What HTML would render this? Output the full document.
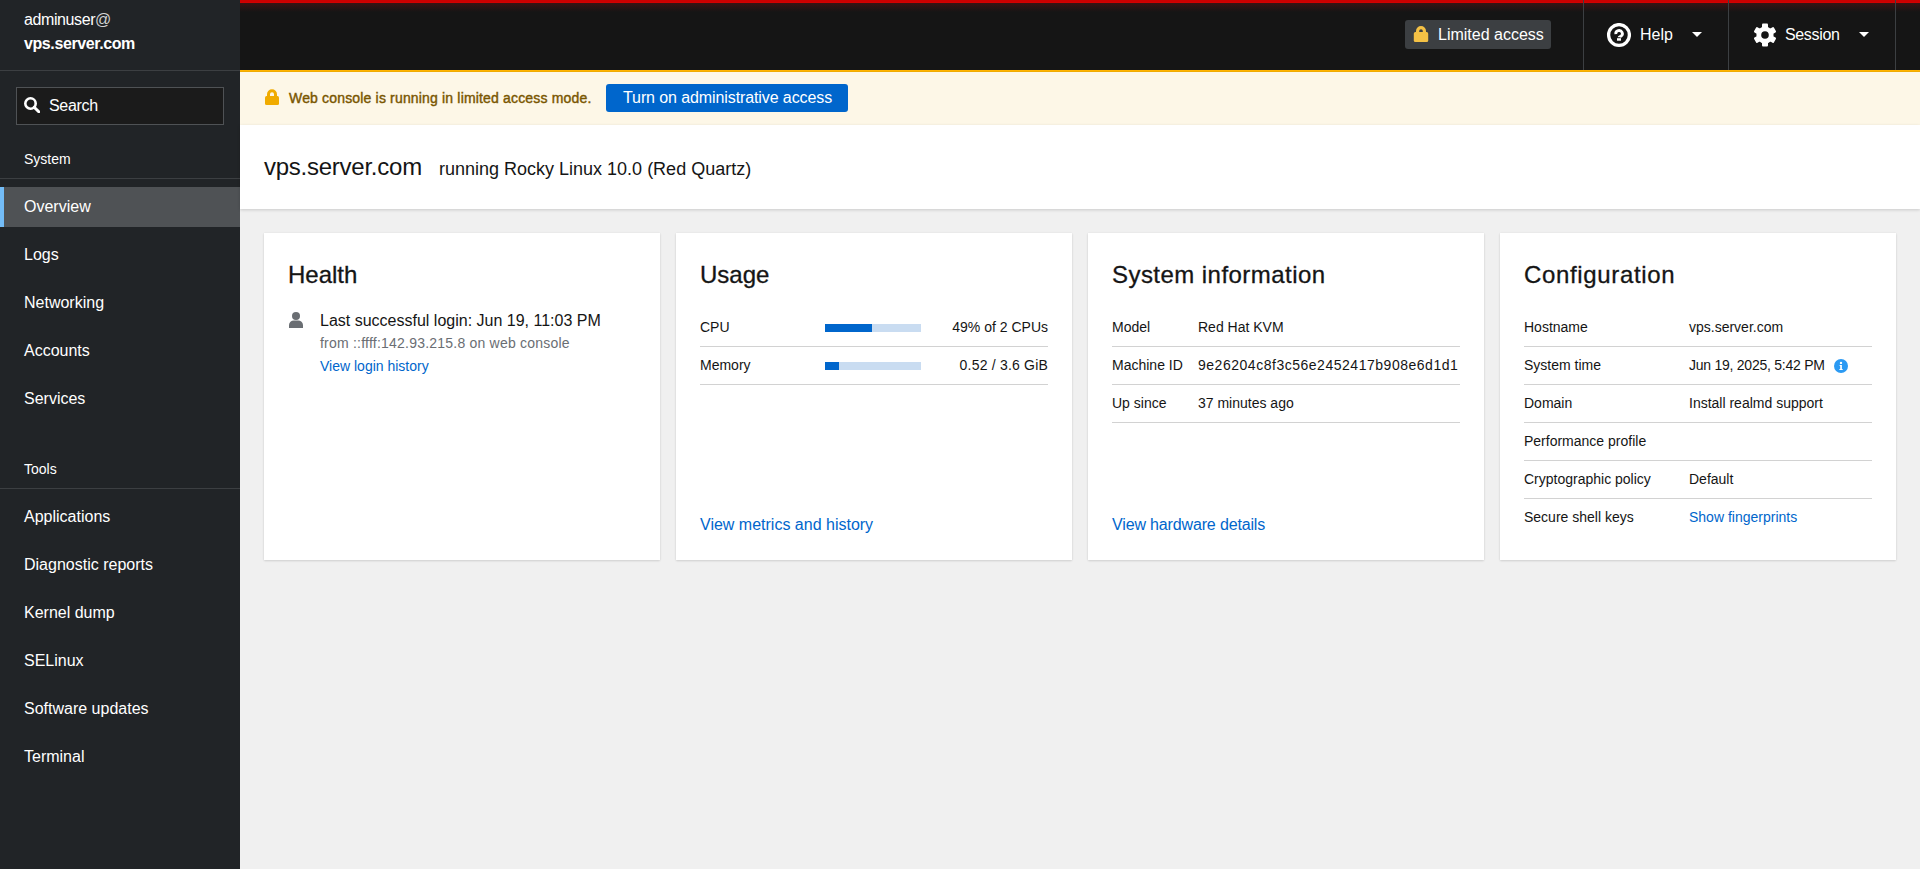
<!DOCTYPE html>
<html><head><meta charset="utf-8">
<style>
*{box-sizing:border-box;margin:0;padding:0}
html,body{width:1920px;height:869px;overflow:hidden}
body{background:#f0f0f0;font-family:"Liberation Sans",sans-serif;color:#151515;position:relative}
.t{position:absolute;line-height:1;white-space:nowrap}
.abs{position:absolute}
#side{position:absolute;left:0;top:0;width:240px;height:869px;background:#212427}
#side .t{color:#fff}
.card{position:absolute;top:233px;width:396px;height:327px;background:#fff;box-shadow:0 1px 2px rgba(3,3,3,.12),0 0 2px rgba(3,3,3,.06)}
#top{position:absolute;left:240px;top:0;width:1680px;height:70px;background:#151515}
</style></head><body>

<!-- SIDEBAR -->
<div id="side">
  <div class="t" style="left:24px;top:11.5px;font-size:16px;letter-spacing:-0.4px">adminuser<span style="color:#d2d2d2">@</span></div>
  <div class="t" style="left:24px;top:35.5px;font-size:16px;font-weight:bold;letter-spacing:-0.4px">vps.server.com</div>
  <div class="abs" style="left:0;top:70px;width:240px;height:1px;background:#3c3f42"></div>
  <div class="abs" style="left:16px;top:87px;width:208px;height:38px;border:1px solid #4f5255;background:#1b1b1b"></div>
  <svg class="abs" style="left:24px;top:97px" width="16" height="16" viewBox="0 0 16 16"><circle cx="6.5" cy="6.5" r="5.2" fill="none" stroke="#fff" stroke-width="2.6"/><line x1="10.2" y1="10.2" x2="14.8" y2="14.8" stroke="#fff" stroke-width="3" stroke-linecap="round"/></svg>
  <div class="t" style="left:49px;top:98px;font-size:16px;letter-spacing:-0.3px">Search</div>

  <div class="t" style="left:24px;top:151.5px;font-size:14px;">System</div>
  <div class="abs" style="left:0;top:178px;width:240px;height:1px;background:#3c3f42"></div>
  <div class="abs" style="left:0;top:187px;width:240px;height:40px;background:#4f5255"></div>
  <div class="abs" style="left:0;top:187px;width:4px;height:40px;background:#73bcf7"></div>
  <div class="t" style="left:24px;top:199.2px;font-size:16px;">Overview</div>
  <div class="t" style="left:24px;top:247.2px;font-size:16px;">Logs</div>
  <div class="t" style="left:24px;top:295.2px;font-size:16px;">Networking</div>
  <div class="t" style="left:24px;top:343.2px;font-size:16px;">Accounts</div>
  <div class="t" style="left:24px;top:391.2px;font-size:16px;">Services</div>

  <div class="t" style="left:24px;top:462px;font-size:14px;">Tools</div>
  <div class="abs" style="left:0;top:488px;width:240px;height:1px;background:#3c3f42"></div>
  <div class="t" style="left:24px;top:509.2px;font-size:16px;">Applications</div>
  <div class="t" style="left:24px;top:557.2px;font-size:16px;">Diagnostic reports</div>
  <div class="t" style="left:24px;top:605.2px;font-size:16px;">Kernel dump</div>
  <div class="t" style="left:24px;top:653.2px;font-size:16px;">SELinux</div>
  <div class="t" style="left:24px;top:701.2px;font-size:16px;">Software updates</div>
  <div class="t" style="left:24px;top:749.2px;font-size:16px;">Terminal</div>
</div>

<!-- TOPBAR -->
<div id="top">
  <div class="abs" style="left:0;top:0;width:1680px;height:3px;background:linear-gradient(#cc0000 0,#cc0000 2px,#d40000 2px)"></div>
  <div class="abs" style="left:0;top:3px;width:1680px;height:9px;background:linear-gradient(#3a1313,#151515)"></div>
  <!-- limited access -->
  <div class="abs" style="left:1165px;top:20px;width:146px;height:29px;background:#3c3f42;border-radius:3px"></div>
  <svg class="abs" style="left:1173px;top:25px" width="16" height="18" viewBox="0 0 16 18"><path d="M4.6 8V6.1A3.4 3.4 0 0 1 11.4 6.1V8" fill="none" stroke="#f4c145" stroke-width="3.2"/><rect x="0.8" y="7.1" width="14.4" height="9.9" rx="1.6" fill="#f4c145"/></svg>
  <div class="t" style="left:1198px;top:26.5px;font-size:16px;color:#fff">Limited access</div>
  <div class="abs" style="left:1343px;top:0;width:1px;height:70px;background:#3c3f42"></div>
  <!-- help -->
  <svg class="abs" style="left:1366px;top:23px" width="25" height="25" viewBox="0 0 25 25"><circle cx="13" cy="12" r="10.4" fill="none" stroke="#fff" stroke-width="3.3"/><path d="M9.8 11.1A3.3 3.1 0 1 1 14.8 13.3C13.6 13.9 13.1 14.1 13.1 14.3" fill="none" stroke="#fff" stroke-width="2.8"/><rect x="11" y="15.2" width="4" height="2.5" fill="#fff"/></svg>
  <div class="t" style="left:1400px;top:26.5px;font-size:16px;color:#fff">Help</div>
  <svg class="abs" style="left:1452px;top:32px" width="10" height="5" viewBox="0 0 10 5"><path d="M0 0H10L5 5Z" fill="#fff"/></svg>
  <div class="abs" style="left:1488px;top:0;width:1px;height:70px;background:#3c3f42"></div>
  <!-- session -->
  <svg class="abs" style="left:1513px;top:23px" width="24" height="24" viewBox="-12 -12 24 24"><g fill="#fff"><circle r="8.6"/><rect x="-3" y="-11.4" width="6" height="22.8" rx="1"/><rect x="-3" y="-11.4" width="6" height="22.8" rx="1" transform="rotate(60)"/><rect x="-3" y="-11.4" width="6" height="22.8" rx="1" transform="rotate(120)"/></g><circle r="3.8" fill="#151515"/></svg>
  <div class="t" style="left:1545px;top:26.5px;font-size:16px;color:#fff;letter-spacing:-0.35px">Session</div>
  <svg class="abs" style="left:1619px;top:32px" width="10" height="5" viewBox="0 0 10 5"><path d="M0 0H10L5 5Z" fill="#fff"/></svg>
  <div class="abs" style="left:1655px;top:0;width:1px;height:70px;background:#3c3f42"></div>
</div>
<div class="abs" style="left:240px;top:70px;width:1680px;height:2px;background:linear-gradient(#ffb300 0,#ffb300 1px,#f0ab00 1px)"></div>

<!-- BANNER -->
<div class="abs" style="left:240px;top:72px;width:1680px;height:53px;background:#fdf7e7"></div>
<svg class="abs" style="left:265px;top:89px" width="14" height="16" viewBox="0 0 14 16"><path d="M3.5 7.5V5.3A3.5 3.5 0 0 1 10.5 5.3V7.5" fill="none" stroke="#f0ab00" stroke-width="3"/><rect x="0" y="7" width="14" height="9" rx="1.5" fill="#f0ab00"/></svg>
<div class="t" style="left:289px;top:91.2px;font-size:14px;color:#795600;-webkit-text-stroke:0.4px #795600;letter-spacing:0.17px">Web console is running in limited access mode.</div>
<div class="abs" style="left:606px;top:84px;width:242px;height:28px;background:#0066cc;border-radius:3px"></div>
<div class="t" style="left:623px;top:89.5px;font-size:16px;color:#fff;letter-spacing:-0.1px">Turn on administrative access</div>

<!-- HEADER -->
<div class="abs" style="left:240px;top:125px;width:1680px;height:84px;background:#fff;box-shadow:0 1px 3px rgba(3,3,3,.16)"></div>
<div class="t" style="left:264px;top:154.7px;font-size:24px;letter-spacing:-0.25px">vps.server.com</div>
<div class="t" style="left:439px;top:159.8px;font-size:18px;">running Rocky Linux 10.0 (Red Quartz)</div>



<!-- CARDS -->
<div class="card" style="left:264px"></div>
<div class="card" style="left:676px"></div>
<div class="card" style="left:1088px"></div>
<div class="card" style="left:1500px"></div>
<div class="t" style="left:288px;top:263px;font-size:24px;;-webkit-text-stroke:0.3px #151515">Health</div>
<div class="t" style="left:700px;top:263px;font-size:24px;;-webkit-text-stroke:0.3px #151515">Usage</div>
<div class="t" style="left:1112px;top:263px;font-size:24px;letter-spacing:0.45px;-webkit-text-stroke:0.3px #151515">System information</div>
<div class="t" style="left:1524px;top:263px;font-size:24px;letter-spacing:0.65px;-webkit-text-stroke:0.3px #151515">Configuration</div>
<svg class="abs" style="left:289px;top:312px" width="14" height="16" viewBox="0 0 14 16"><circle cx="7" cy="4.1" r="4" fill="#6a6e73"/><path d="M0 16V13A4.8 4.8 0 0 1 4.8 8.4H9.2A4.8 4.8 0 0 1 14 13V16Z" fill="#6a6e73"/></svg>
<div class="t" style="left:320px;top:313.3px;font-size:16px;">Last successful login: Jun 19, 11:03 PM</div>
<div class="t" style="left:320px;top:336.15px;font-size:14px;color:#6a6e73;letter-spacing:0.22px">from ::ffff:142.93.215.8 on web console</div>
<div class="t" style="left:320px;top:359.15px;font-size:14px;color:#0066cc">View login history</div>
<div class="t" style="left:700px;top:320.15px;font-size:14px;">CPU</div>
<div class="abs" style="left:825px;top:324px;width:96px;height:8px;background:#c9dcf1"></div><div class="abs" style="left:825px;top:324px;width:47px;height:8px;background:#0066cc"></div>
<div class="t" style="right:872px;top:320.15px;font-size:14px;">49% of 2 CPUs</div>
<div class="abs" style="left:700px;top:346px;width:348px;height:1px;background:#d2d2d2"></div>
<div class="t" style="left:700px;top:358.15px;font-size:14px;">Memory</div>
<div class="abs" style="left:825px;top:362px;width:96px;height:8px;background:#c9dcf1"></div><div class="abs" style="left:825px;top:362px;width:14px;height:8px;background:#0066cc"></div>
<div class="t" style="right:872px;top:358.15px;font-size:14px;letter-spacing:0.2px">0.52 / 3.6 GiB</div>
<div class="abs" style="left:700px;top:384px;width:348px;height:1px;background:#d2d2d2"></div>
<div class="t" style="left:700px;top:516.5px;font-size:16px;color:#0066cc">View metrics and history</div>
<div class="t" style="left:1112px;top:320.15px;font-size:14px;">Model</div>
<div class="t" style="left:1198px;top:320.15px;font-size:14px;">Red Hat KVM</div>
<div class="abs" style="left:1112px;top:346px;width:348px;height:1px;background:#d2d2d2"></div>
<div class="t" style="left:1112px;top:358.15px;font-size:14px;">Machine ID</div>
<div class="t" style="left:1198px;top:358.15px;font-size:14px;letter-spacing:0.52px">9e26204c8f3c56e2452417b908e6d1d1</div>
<div class="abs" style="left:1112px;top:384px;width:348px;height:1px;background:#d2d2d2"></div>
<div class="t" style="left:1112px;top:396.15px;font-size:14px;">Up since</div>
<div class="t" style="left:1198px;top:396.15px;font-size:14px;">37 minutes ago</div>
<div class="abs" style="left:1112px;top:422px;width:348px;height:1px;background:#d2d2d2"></div>
<div class="t" style="left:1112px;top:516.5px;font-size:16px;color:#0066cc;letter-spacing:-0.15px">View hardware details</div>
<div class="t" style="left:1524px;top:320.15px;font-size:14px;">Hostname</div>
<div class="t" style="left:1689px;top:320.15px;font-size:14px;">vps.server.com</div>
<div class="abs" style="left:1524px;top:346px;width:348px;height:1px;background:#d2d2d2"></div>
<div class="t" style="left:1524px;top:358.15px;font-size:14px;">System time</div>
<div class="t" style="left:1689px;top:358.15px;font-size:14px;letter-spacing:-0.25px">Jun 19, 2025, 5:42 PM</div>
<div class="abs" style="left:1524px;top:384px;width:348px;height:1px;background:#d2d2d2"></div>
<div class="t" style="left:1524px;top:396.15px;font-size:14px;">Domain</div>
<div class="t" style="left:1689px;top:396.15px;font-size:14px;">Install realmd support</div>
<div class="abs" style="left:1524px;top:422px;width:348px;height:1px;background:#d2d2d2"></div>
<div class="t" style="left:1524px;top:434.15px;font-size:14px;">Performance profile</div>
<div class="abs" style="left:1524px;top:460px;width:348px;height:1px;background:#d2d2d2"></div>
<div class="t" style="left:1524px;top:472.15px;font-size:14px;">Cryptographic policy</div>
<div class="t" style="left:1689px;top:472.15px;font-size:14px;">Default</div>
<div class="abs" style="left:1524px;top:498px;width:348px;height:1px;background:#d2d2d2"></div>
<div class="t" style="left:1524px;top:510.15px;font-size:14px;">Secure shell keys</div>
<div class="t" style="left:1689px;top:510.15px;font-size:14px;color:#0066cc">Show fingerprints</div>
<svg class="abs" style="left:1834px;top:359px" width="14" height="14" viewBox="0 0 14 14"><circle cx="7" cy="7" r="7" fill="#2b9af3"/><circle cx="7" cy="3.9" r="1.2" fill="#fff"/><path d="M5.6 6H7.9V9.9H8.7V11H5.4V9.9H6.2V7.1H5.6Z" fill="#fff"/></svg>
</body></html>
